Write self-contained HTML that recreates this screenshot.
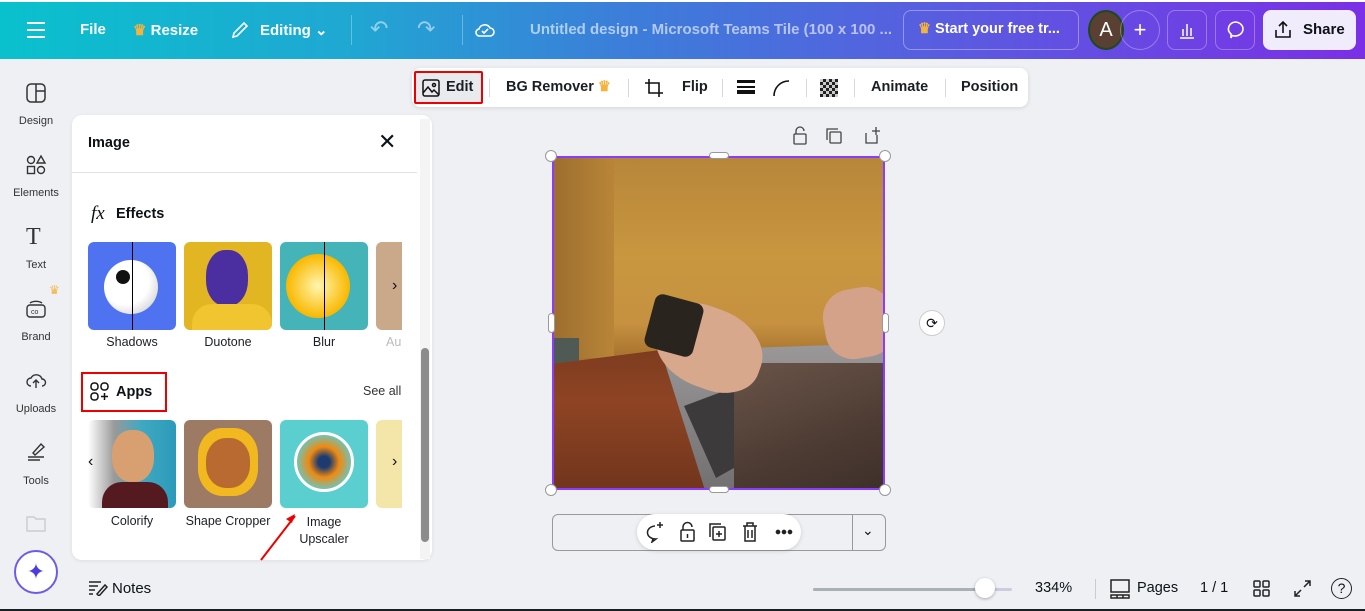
<!DOCTYPE html>
<html><head><meta charset="utf-8"><style>
*{box-sizing:border-box;margin:0;padding:0}
body{width:1365px;height:611px;overflow:hidden;background:#eef0f4;font-family:"Liberation Sans",sans-serif;position:relative;color:#0d1216}
.abs{position:absolute}
.top{left:0;top:0;width:1365px;height:59px;background:linear-gradient(90deg,#09c1cd 0%,#1fa8d2 25%,#3b7fd9 45%,#5a5be0 70%,#7b2fe6 100%);border-top:2px solid #fff}
.tw{color:#fff;font-weight:bold;font-size:15px;top:21px}
.tb{top:68px;left:412px;width:616px;height:39px;background:#fff;border-radius:8px;box-shadow:0 1px 4px rgba(0,0,0,.12)}
.tb span{position:absolute;top:11px;font-size:14.5px;font-weight:bold;color:#1a1f24}
.sep{position:absolute;width:1px;height:18px;background:#d5d8dc;top:11px}
.side{font-size:11px;color:#333;width:72px;text-align:center;left:0}
.panel{left:72px;top:115px;width:360px;height:445px;background:#fff;border-radius:10px;box-shadow:0 1px 4px rgba(0,0,0,.08)}
.tile{position:absolute;width:88px;height:88px;border-radius:6px;overflow:hidden}
.lbl{position:absolute;font-size:12.5px;text-align:center;width:100px;color:#1a1f24}
.h{width:12px;height:12px;border-radius:50%;background:#fff;border:1px solid #999;position:absolute}
.photo div{position:absolute}
</style></head><body>
<div class="abs top"></div>
<div class="abs" style="left:27px;top:22px;width:18px">
<div style="height:2px;background:#fff;margin-bottom:5px"></div><div style="height:2px;background:#fff;margin-bottom:5px"></div><div style="height:2px;background:#fff"></div></div>
<div class="abs tw" style="left:80px">File</div>
<div class="abs tw" style="left:133px"><span style="color:#f6b33c">♛</span> Resize</div>
<svg class="abs" style="left:230px;top:20px" width="20" height="20" viewBox="0 0 20 20" fill="none" stroke="#fff" stroke-width="1.6"><path d="M3 17l1-4L14 3l3 3L7 16z"/></svg>
<div class="abs tw" style="left:260px">Editing ⌄</div>
<div class="abs" style="left:351px;top:15px;width:1px;height:30px;background:rgba(255,255,255,.3)"></div>
<div class="abs" style="left:370px;top:16px;color:rgba(255,255,255,.5);font-size:22px">↶</div>
<div class="abs" style="left:417px;top:16px;color:rgba(255,255,255,.5);font-size:22px">↷</div>
<div class="abs" style="left:462px;top:15px;width:1px;height:30px;background:rgba(255,255,255,.3)"></div>
<svg class="abs" style="left:474px;top:19px" width="22" height="20" viewBox="0 0 22 20" fill="none" stroke="#fff" stroke-width="1.6"><path d="M6 17h10a4 4 0 0 0 0-8 6 6 0 0 0-11 1 3.5 3.5 0 0 0 1 7z"/><path d="M8 12l2 2 4-4"/></svg>
<div class="abs tw" style="left:530px;color:rgba(255,255,255,.6)">Untitled design - Microsoft Teams Tile (100 x 100 ...</div>
<div class="abs" style="left:903px;top:10px;width:176px;height:40px;border:1px solid rgba(255,255,255,.35);border-radius:8px"></div>
<div class="abs tw" style="left:918px;font-size:14.5px"><span style="color:#f6b33c">♛</span> Start your free tr...</div>
<div class="abs" style="left:1088px;top:10px;width:36px;height:40px;border-radius:50%;background:#5a3f33;border:2px solid #1b4a1b;color:#fff;font-size:20px;text-align:center;line-height:36px">A</div>
<div class="abs" style="left:1120px;top:10px;width:40px;height:40px;border-radius:50%;border:1px solid rgba(255,255,255,.3);color:#fff;font-size:22px;text-align:center;line-height:38px">+</div>
<div class="abs" style="left:1167px;top:10px;width:40px;height:40px;border-radius:8px;border:1px solid rgba(255,255,255,.3)"></div>
<svg class="abs" style="left:1177px;top:20px" width="20" height="20" stroke="#fff" stroke-width="1.5"><path d="M3 18h14M6 16V9M10 16V4M14 16V8"/></svg>
<div class="abs" style="left:1215px;top:10px;width:40px;height:40px;border-radius:8px;border:1px solid rgba(255,255,255,.3)"></div>
<svg class="abs" style="left:1225px;top:19px" width="20" height="22" fill="none" stroke="#fff" stroke-width="1.6"><path d="M10 3a8 7 0 1 1-3 13.5L6 19l0-4A8 7 0 0 1 10 3z"/></svg>
<div class="abs" style="left:1263px;top:10px;width:93px;height:40px;border-radius:8px;background:#f1ecfc"></div>
<svg class="abs" style="left:1273px;top:19px" width="20" height="20" fill="none" stroke="#111" stroke-width="1.6"><path d="M3 11v7h14v-7M10 14V3M6 7l4-4 4 4"/></svg>
<div class="abs" style="left:1303px;top:21px;font-weight:bold;font-size:15px">Share</div>

<div class="abs tb">
<div class="abs" style="left:2px;top:3px;width:69px;height:33px;border:2px solid #e00;background:#e8eaed;border-radius:2px"></div>
<svg class="abs" style="left:9px;top:10px" width="20" height="20" fill="none" stroke="#111" stroke-width="1.5"><rect x="2" y="2" width="16" height="16" rx="2"/><path d="M2 15l5-6 4 5 2-2 5 5"/><circle cx="13" cy="7" r="1.5"/></svg>
<span style="left:34px">Edit</span>
<div class="sep" style="left:77px"></div>
<span style="left:94px">BG Remover <span style="position:static;color:#f6b33c">♛</span></span>
<div class="sep" style="left:216px"></div>
<svg class="abs" style="left:232px;top:10px" width="20" height="20" fill="none" stroke="#111" stroke-width="1.6"><path d="M5 1v14h14M1 5h14v14"/></svg>
<span style="left:270px">Flip</span>
<div class="sep" style="left:310px"></div>
<div class="abs" style="left:325px;top:12px;width:18px;height:3px;background:#111"></div>
<div class="abs" style="left:325px;top:18px;width:18px;height:2px;background:#111"></div>
<div class="abs" style="left:325px;top:22px;width:18px;height:4px;background:#111"></div>
<svg class="abs" style="left:360px;top:11px" width="20" height="18" fill="none" stroke="#111" stroke-width="1.6"><path d="M2 17C2 9 8 2 17 2"/></svg>
<div class="sep" style="left:394px"></div>
<div class="abs" style="left:408px;top:11px;width:18px;height:18px;background:repeating-conic-gradient(#222 0 25%,#ccc 0 50%) 0 0/6px 6px"></div>
<div class="sep" style="left:442px"></div>
<span style="left:459px">Animate</span>
<div class="sep" style="left:533px"></div>
<span style="left:549px">Position</span>
</div>

<!-- sidebar -->
<svg class="abs" style="left:26px;top:83px" width="20" height="20" fill="none" stroke="#333" stroke-width="1.5"><rect x="1" y="1" width="18" height="18" rx="4"/><path d="M10 1v18M10 8h9"/></svg>
<div class="abs side" style="top:115px">Design</div>
<svg class="abs" style="left:26px;top:155px" width="20" height="20" fill="none" stroke="#333" stroke-width="1.4"><circle cx="5" cy="5" r="3.5"/><path d="M15 1l4 7h-8z"/><rect x="1.5" y="11.5" width="7" height="7"/><circle cx="15" cy="15" r="3.5"/></svg>
<div class="abs side" style="top:187px">Elements</div>
<div class="abs" style="left:26px;top:224px;font-family:'Liberation Serif';font-size:24px;color:#333">T</div>
<div class="abs side" style="top:259px">Text</div>
<div class="abs" style="left:49px;top:283px;color:#f6b33c;font-size:12px">♛</div>
<svg class="abs" style="left:25px;top:298px" width="22" height="22" fill="none" stroke="#333" stroke-width="1.4"><rect x="2" y="7" width="18" height="12" rx="3"/><path d="M5 5a8 5 0 0 1 12 0"/><text x="6" y="16" font-size="7" fill="#333" stroke="none" font-family="Liberation Sans">co</text></svg>
<div class="abs side" style="top:331px">Brand</div>
<svg class="abs" style="left:25px;top:370px" width="22" height="20" fill="none" stroke="#333" stroke-width="1.4"><path d="M6 16a4 4 0 0 1 0-8 6 6 0 0 1 11 1 3.5 3.5 0 0 1 0 7M11 18v-8M8 13l3-3 3 3"/></svg>
<div class="abs side" style="top:403px">Uploads</div>
<svg class="abs" style="left:25px;top:440px" width="22" height="22" fill="none" stroke="#333" stroke-width="1.4"><path d="M8 13l8-9 3 3-9 8zM3 17h16M3 20h12"/></svg>
<div class="abs side" style="top:475px">Tools</div>
<svg class="abs" style="left:26px;top:514px" width="20" height="18" fill="none" stroke="#ccc" stroke-width="1.4"><path d="M1 3h7l2 2h9v12H1z"/></svg>
<div class="abs" style="left:14px;top:550px;width:44px;height:44px;border-radius:50%;border:2px solid #6b5ce8;background:#fff;color:#4a3ce0;font-size:22px;text-align:center;line-height:40px">✦</div>

<!-- panel -->
<div class="abs panel">
<div class="abs" style="left:16px;top:20px;font-size:14.5px;font-weight:bold">Image</div>
<div class="abs" style="left:306px;top:14px;font-size:22px;font-weight:300">✕</div>
<div class="abs" style="left:0;top:57px;width:345px;height:1px;background:#dfe1e4"></div>
<div class="abs" style="left:19px;top:88px;font-family:'Liberation Serif';font-style:italic;font-size:19px">fx</div>
<div class="abs" style="left:44px;top:91px;font-size:14.5px;font-weight:bold">Effects</div>
<div class="tile" style="left:16px;top:127px;background:#4f73f0"><div class="abs" style="left:16px;top:18px;width:54px;height:54px;border-radius:50%;background:radial-gradient(circle at 40% 40%,#fff 50%,#bbb);"></div><div class="abs" style="left:28px;top:28px;width:14px;height:14px;background:#111;border-radius:50%"></div><div class="abs" style="left:44px;top:0;width:1px;height:88px;background:#000"></div></div>
<div class="tile" style="left:112px;top:127px;background:#e2b622"><div class="abs" style="left:22px;top:8px;width:42px;height:56px;border-radius:45%;background:#4b2fa0"></div><div class="abs" style="left:8px;top:62px;width:80px;height:30px;border-radius:20px 20px 0 0;background:#f0c530"></div></div>
<div class="tile" style="left:208px;top:127px;background:#45b4b8"><div class="abs" style="left:6px;top:12px;width:64px;height:64px;border-radius:50%;background:radial-gradient(circle,#fff6b0,#f9b800 70%,#f0a000)"></div><div class="abs" style="left:44px;top:0;width:1px;height:88px;background:#000"></div></div>
<div class="tile" style="left:304px;top:127px;width:26px;border-radius:6px 0 0 6px;background:#c9a98a"></div>
<div class="abs" style="left:320px;top:162px;font-size:16px">›</div>
<div class="lbl" style="left:10px;top:220px">Shadows</div>
<div class="lbl" style="left:106px;top:220px">Duotone</div>
<div class="lbl" style="left:202px;top:220px">Blur</div>
<div class="abs" style="left:314px;top:220px;font-size:12.5px;color:#bbb">Au</div>
<div class="abs" style="left:9px;top:257px;width:86px;height:40px;border:2px solid #e00"></div>
<svg class="abs" style="left:18px;top:267px" width="20" height="20" fill="none" stroke="#111" stroke-width="1.5"><rect x="1" y="1" width="7" height="7" rx="3"/><rect x="11" y="1" width="7" height="7" rx="3"/><rect x="1" y="11" width="7" height="7" rx="3"/><path d="M14.5 11v7M11 14.5h7"/></svg>
<div class="abs" style="left:44px;top:269px;font-size:14.5px;font-weight:bold">Apps</div>
<div class="abs" style="left:291px;top:269px;font-size:12.5px;color:#333">See all</div>
<div class="tile" style="left:16px;top:305px;background:linear-gradient(90deg,#fff,#999 30%,#3fa9c2 60%,#2b9ab9)"><div class="abs" style="left:24px;top:10px;width:42px;height:52px;border-radius:45%;background:#d8a070"></div><div class="abs" style="left:14px;top:62px;width:66px;height:30px;border-radius:20px 20px 0 0;background:#551a20"></div></div>
<div class="tile" style="left:112px;top:305px;background:#9c7a63"><div class="abs" style="left:14px;top:8px;width:60px;height:68px;border-radius:40%;background:#f2b820"></div><div class="abs" style="left:22px;top:18px;width:44px;height:50px;border-radius:45%;background:#b86a30"></div></div>
<div class="tile" style="left:208px;top:305px;background:#5bcfd0"><div class="abs" style="left:14px;top:12px;width:60px;height:60px;border-radius:50%;border:3px solid #fff;background:radial-gradient(circle,#1d3b70 15%,#f08a10 40%,#64c8c8 75%)"></div></div>
<div class="tile" style="left:304px;top:305px;width:26px;border-radius:6px 0 0 6px;background:#f3e6a8"></div>
<div class="abs" style="left:16px;top:338px;font-size:16px">‹</div>
<div class="abs" style="left:320px;top:338px;font-size:16px">›</div>
<div class="lbl" style="left:10px;top:399px">Colorify</div>
<div class="lbl" style="left:106px;top:399px">Shape Cropper</div>
<div class="lbl" style="left:202px;top:399px;line-height:17px">Image<br>Upscaler</div>
<svg class="abs" style="left:185px;top:395px" width="45" height="55"><path d="M4 50L38 6" stroke="#e00" stroke-width="2"/><path d="M38 4l-9 5 6 4z" fill="#e00"/></svg>
<div class="abs" style="left:348px;top:4px;width:10px;height:440px;background:#f4f4f4"></div>
<div class="abs" style="left:349px;top:233px;width:8px;height:194px;border-radius:4px;background:#8c8c8c"></div>
</div>

<!-- canvas -->
<svg class="abs" style="left:790px;top:126px" width="100" height="22" fill="none" stroke="#444" stroke-width="1.3"><rect x="4" y="8" width="12" height="10" rx="1"/><path d="M6 8V5a4 4 0 0 1 8 0"/><rect x="40" y="6" width="11" height="11" rx="1"/><path d="M37 14V3h11"/><path d="M76 7v10h11V9M86 1v8M82 5h8"/></svg>
<div class="abs photo" style="left:552px;top:156px;width:333px;height:334px;border:2px solid #8b3dff;overflow:hidden;background:linear-gradient(180deg,#b8863a 0%,#c8973f 30%,#c69140 50%,#a8742f 60%)">
<div style="left:0;top:0;width:60px;height:200px;background:linear-gradient(90deg,#9d6e2f,#b88538)"></div>
<div style="left:0;top:180px;width:25px;height:50px;background:#4f5a55"></div>
<div style="left:0;top:180px;width:200px;height:160px;background:linear-gradient(180deg,#7a3a1e,#8e4424 40%,#6e341c);clip-path:polygon(0 16%,100% 0,100% 100%,0 100%)"></div>
<div style="left:95px;top:185px;width:240px;height:160px;background:linear-gradient(180deg,#9a9898,#6e6c6c);clip-path:polygon(5% 5%,100% 0,100% 100%,25% 100%)"></div>
<div style="left:130px;top:230px;width:80px;height:90px;background:#3c3a3a;clip-path:polygon(0 20%,60% 0,100% 70%,40% 100%)"></div>
<div style="left:180px;top:205px;width:160px;height:140px;background:linear-gradient(160deg,#6a5448,#4b3a32 60%,#3a2d27)"></div>
<div style="left:100px;top:150px;width:110px;height:80px;border-radius:40% 50% 40% 50%;background:#d8a88c;transform:rotate(20deg)"></div>
<div style="left:270px;top:130px;width:70px;height:70px;border-radius:40%;background:#d3a288;transform:rotate(-10deg)"></div>
<div style="left:95px;top:140px;width:50px;height:55px;background:#2a241f;border-radius:8px;transform:rotate(15deg)"></div>
</div>
<div class="h" style="left:545px;top:150px"></div><div class="h" style="left:879px;top:150px"></div><div class="h" style="left:545px;top:484px"></div><div class="h" style="left:879px;top:484px"></div>
<div class="abs" style="left:709px;top:152px;width:20px;height:7px;border-radius:4px;background:#fff;border:1px solid #999"></div>
<div class="abs" style="left:709px;top:486px;width:20px;height:7px;border-radius:4px;background:#fff;border:1px solid #999"></div>
<div class="abs" style="left:548px;top:313px;width:7px;height:20px;border-radius:4px;background:#fff;border:1px solid #999"></div>
<div class="abs" style="left:882px;top:313px;width:7px;height:20px;border-radius:4px;background:#fff;border:1px solid #999"></div>
<div class="abs" style="left:919px;top:310px;width:26px;height:26px;border-radius:50%;background:#fff;border:1px solid #ccc;text-align:center;line-height:24px;font-size:14px">⟳</div>
<div class="abs" style="left:552px;top:514px;width:334px;height:37px;border:1px solid #999;border-radius:6px"></div>
<div class="abs" style="left:852px;top:514px;width:1px;height:37px;background:#999"></div>
<div class="abs" style="left:862px;top:522px;font-size:14px">⌄</div>
<div class="abs" style="left:637px;top:514px;width:164px;height:36px;border-radius:18px;background:#fff;box-shadow:0 1px 4px rgba(0,0,0,.15)"></div>
<svg class="abs" style="left:644px;top:521px" width="152" height="22" fill="none" stroke="#222" stroke-width="1.5"><path d="M11 5a8 6.5 0 1 0 1 13l-4 3 1-3"/><path d="M16 1v6M13 4h6"/><rect x="37" y="9" width="13" height="11" rx="1"/><path d="M39 9V6a4.5 4.5 0 0 1 9 0M43.5 17v-4"/><rect x="69" y="6" width="12" height="13" rx="1"/><path d="M66 16V3h11M75 10v6M72 13h6"/><path d="M99 5h14M103 5V2h6v3M101 5v15h10V5M104 9v8M108 9v8"/><circle cx="134" cy="11" r="1.6" fill="#222"/><circle cx="140" cy="11" r="1.6" fill="#222"/><circle cx="146" cy="11" r="1.6" fill="#222"/></svg>

<!-- bottom -->
<svg class="abs" style="left:88px;top:580px" width="20" height="16" fill="none" stroke="#222" stroke-width="1.5"><path d="M1 2h12M1 6h9M1 10h6M1 14h4M9 14l8-9 2 2-8 9z"/></svg>
<div class="abs" style="left:112px;top:580px;font-size:15px">Notes</div>
<div class="abs" style="left:813px;top:588px;width:199px;height:3px;background:#ccd;border-radius:2px"></div>
<div class="abs" style="left:813px;top:588px;width:170px;height:3px;background:#aab0b8;border-radius:2px"></div>
<div class="abs" style="left:975px;top:578px;width:20px;height:20px;border-radius:50%;background:#fff;box-shadow:0 1px 3px rgba(0,0,0,.3)"></div>
<div class="abs" style="left:1035px;top:580px;font-size:14.5px">334%</div>
<div class="abs" style="left:1095px;top:579px;width:1px;height:20px;background:#ccc"></div>
<svg class="abs" style="left:1110px;top:579px" width="20" height="20" fill="none" stroke="#222" stroke-width="1.5"><rect x="1" y="1" width="18" height="12"/><path d="M1 16h18v3H1zM7 16v3M13 16v3"/></svg>
<div class="abs" style="left:1137px;top:580px;font-size:14.5px">Pages</div>
<div class="abs" style="left:1200px;top:580px;font-size:14.5px">1 / 1</div>
<svg class="abs" style="left:1253px;top:580px" width="17" height="17" fill="none" stroke="#222" stroke-width="1.5"><rect x="1" y="1" width="6" height="6" rx="1"/><rect x="10" y="1" width="6" height="6" rx="1"/><rect x="1" y="10" width="6" height="6" rx="1"/><rect x="10" y="10" width="6" height="6" rx="1"/></svg>
<svg class="abs" style="left:1294px;top:580px" width="17" height="17" fill="none" stroke="#222" stroke-width="1.5"><path d="M10 7l6-6M11 1h5v5M7 10l-6 6M1 11v5h5"/></svg>
<div class="abs" style="left:1331px;top:578px;width:21px;height:21px;border-radius:50%;border:1.5px solid #222;text-align:center;font-size:14px;line-height:19px">?</div>
<div class="abs" style="left:0;top:609px;width:1365px;height:2px;background:#1a1f24"></div>
</body></html>
